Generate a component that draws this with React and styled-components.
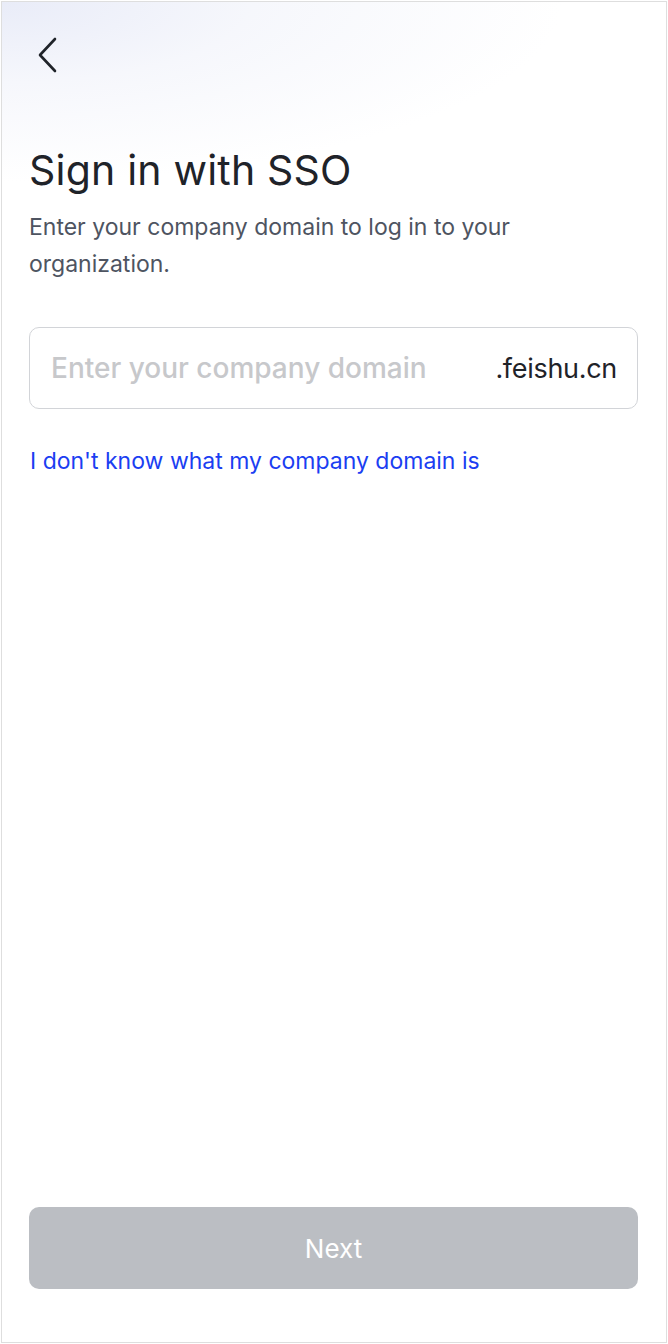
import React from 'react'
import styled, { createGlobalStyle } from 'styled-components'

const GlobalStyle = createGlobalStyle`
    body {
        margin: 0;
        font-family: Inter, "Noto Sans", sans-serif;
        background: #fff;
    }
`

export const Frame = styled.div`
    width: 668px;
    height: 1344px;
    padding: 1px;
    box-sizing: border-box;
    background: #fff;
`
export const Screen = styled.div`
    height: 100%;
    box-sizing: border-box;
    border: 1px solid #dedede;
    display: flex;
    flex-direction: column;
    padding: 0 28px 0 27px;
    background:
        radial-gradient(ellipse 560px 180px at 0 0, #e9ecf8 0%, rgba(240, 242, 250, 0.6) 45%, rgba(255, 255, 255, 0) 100%),
        #fff;
`
export const Header = styled.div`
    height: 112px;
    display: flex;
    align-items: flex-start;
    padding-top: 33px;
    box-sizing: border-box;
`
export const BackButton = styled.button`
    border: none;
    background: none;
    padding: 0 0 0 8px;
    width: 40px;
    height: 40px;
    display: flex;
    align-items: center;
    cursor: pointer;
`
export const Title = styled.h1`
    margin: 30px 0 0 0;
    font-size: 41px;
    line-height: 52px;
    font-weight: 400;
    letter-spacing: 0.2px;
    color: #1f2329;
`
export const Subtitle = styled.p`
    margin: 13px 0 0 0;
    font-size: 23px;
    line-height: 37px;
    color: #4e5461;
    padding-right: 90px;
`
export const Field = styled.label`
    margin-top: 44px;
    height: 82px;
    box-sizing: border-box;
    border: 1px solid #d2d4d8;
    border-radius: 10px;
    display: flex;
    align-items: center;
    padding: 0 20px 0 21px;
    background: #fff;
`
export const Input = styled.input`
    flex: 1;
    min-width: 0;
    border: none;
    outline: none;
    background: none;
    padding: 0;
    font-family: Inter, "Noto Sans", sans-serif;
    font-size: 28px;
    font-weight: 500;
    color: #1f2329;
    &::placeholder {
        color: #c7c8cb;
    }
`
export const Suffix = styled.span`
    font-size: 27px;
    color: #1f2329;
    letter-spacing: -0.3px;
`
export const HelpLink = styled.a`
    margin-top: 37px;
    font-size: 23px;
    line-height: 30px;
    color: #1b3ef2;
    text-decoration: none;
    align-self: flex-start;
    margin-left: 1px;
`
export const Spacer = styled.div`
    flex: 1;
`
export const NextButton = styled.button`
    height: 82px;
    margin-bottom: 53px;
    border: none;
    border-radius: 10px;
    background: #bbbec3;
    color: #fff;
    font-family: Inter, "Noto Sans", sans-serif;
    font-size: 26px;
    font-weight: 400;
    cursor: not-allowed;
`

const ChevronLeft = () => (
    <svg width="20" height="36" viewBox="0 0 20 36" fill="none">
        <path d="M18 2 L3 18 L18 34" stroke="#1f2329" strokeWidth="2.6" strokeLinecap="round" strokeLinejoin="round" />
    </svg>
)

export default function App() {
    return (
        <Frame>
            <GlobalStyle />
            <Screen>
                <Header>
                    <BackButton aria-label="Back">
                        <ChevronLeft />
                    </BackButton>
                </Header>
                <Title>Sign in with SSO</Title>
                <Subtitle>Enter your company domain to log in to your organization.</Subtitle>
                <Field>
                    <Input placeholder="Enter your company domain" />
                    <Suffix>.feishu.cn</Suffix>
                </Field>
                <HelpLink href="#">I don't know what my company domain is</HelpLink>
                <Spacer />
                <NextButton disabled>Next</NextButton>
            </Screen>
        </Frame>
    )
}
